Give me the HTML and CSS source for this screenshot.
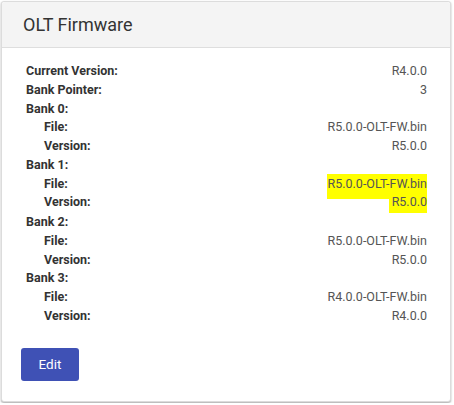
FILE: index.html
```html
<!DOCTYPE html>
<html>
<head>
<meta charset="utf-8">
<link rel="stylesheet" href="styles.css">
</head>
<body>
<div class="card">
  <div class="card-header">OLT Firmware</div>
  <div class="card-body">
    <div class="info">
      <div class="label">Current Version:</div><div class="value">R4.0.0</div>
      <div class="label">Bank Pointer:</div><div class="value">3</div>
      <div class="label">Bank 0:</div><div class="value"></div>
      <div class="label sub">File:</div><div class="value">R5.0.0-OLT-FW.bin</div>
      <div class="label sub">Version:</div><div class="value">R5.0.0</div>
      <div class="label">Bank 1:</div><div class="value"></div>
      <div class="label sub">File:</div><div class="value"><span class="hl hl-file">R5.0.0-OLT-FW.bin</span></div>
      <div class="label sub">Version:</div><div class="value"><span class="hl hl-ver">R5.0.0</span></div>
      <div class="label">Bank 2:</div><div class="value"></div>
      <div class="label sub">File:</div><div class="value">R5.0.0-OLT-FW.bin</div>
      <div class="label sub">Version:</div><div class="value">R5.0.0</div>
      <div class="label">Bank 3:</div><div class="value"></div>
      <div class="label sub">File:</div><div class="value">R4.0.0-OLT-FW.bin</div>
      <div class="label sub">Version:</div><div class="value">R4.0.0</div>
    </div>
    <button class="btn">Edit</button>
  </div>
</div>
</body>
</html>
```
FILE: styles.css
```css
html, body {
  margin: 0;
  padding: 0;
  background: #fff;
}
body {
  font-family: Roboto, "Liberation Sans", Arial, sans-serif;
  padding: 1px;
}
.card {
  width: 448px;
  border: 1px solid #dcdcdc;
  border-radius: 3px;
  box-shadow: 0 1px 2px rgba(0,0,0,0.35);
  background: #fff;
}
.card-header {
  height: 45px;
  background: #f4f4f4;
  border-bottom: 1px solid #dedede;
  border-radius: 3px 3px 0 0;
  padding-left: 21px;
  font-size: 18px;
  line-height: 45px;
  color: #333;
}
.card-body {
  padding: 14px 23px 20px 24px;
}
.info {
  display: grid;
  grid-template-columns: 1fr auto;
  font-size: 12.5px;
  line-height: 18.75px;
}
.label {
  font-weight: 700;
  color: #333;
}
.label.sub {
  padding-left: 18px;
}
.value {
  text-align: right;
  color: #555;
}
.hl {
  background: #ffff00;
  display: inline-block;
}
.hl-file {
  padding: 1px 0 6px 1px;
  margin-top: -1px;
  margin-bottom: -6px;
}
.hl-ver {
  padding: 0 0 1px 3px;
  position: relative;
  z-index: 1;
}
.btn {
  margin: 22px 0 0 -5px;
  width: 58px;
  height: 33px;
  background: #3f51b5;
  color: #fff;
  border: none;
  border-radius: 3px;
  font-family: Roboto, "Liberation Sans", Arial, sans-serif;
  font-size: 13.5px;
  padding: 0;
  display: block;
}
```
